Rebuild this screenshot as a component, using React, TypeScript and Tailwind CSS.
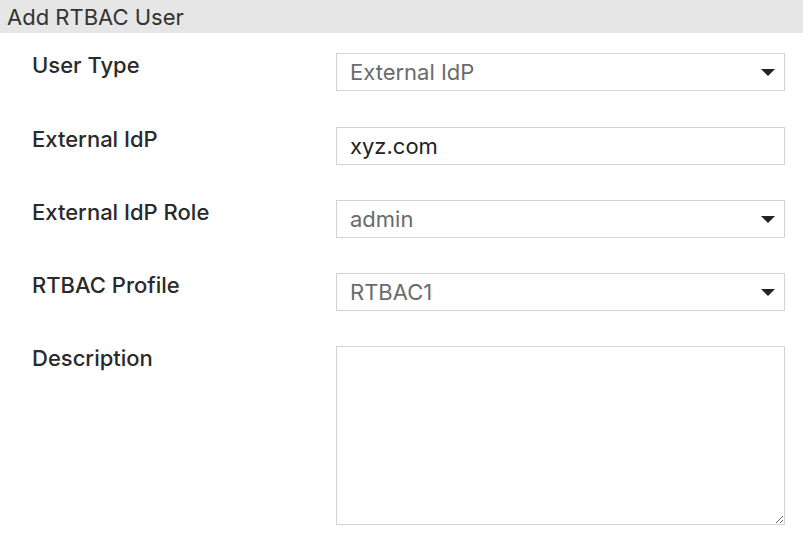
function Caret() {
  return (
    <svg className="w-[14px] h-[7px] shrink-0" viewBox="0 0 14 7" fill="#222">
      <polygon points="0 0 14 0 7 7" />
    </svg>
  );
}

function SelectBox({ value }: { value: string }) {
  return (
    <div className="flex items-center justify-between h-[38px] w-[449px] border border-[#d2d2d2] bg-white pl-[13px] pr-[9px]">
      <span className="text-[22px] leading-[26px] text-[#6b6b6b]">{value}</span>
      <Caret />
    </div>
  );
}

function Row({ label, extra, children }: { label: string; extra?: string; children: React.ReactNode }) {
  return (
    <div className={"flex items-start " + (extra ?? "")}>
      <div className="w-[304px] shrink-0 text-[22px] leading-[24px] font-medium text-[#2a2a2a]">{label}</div>
      {children}
    </div>
  );
}

export default function App() {
  return (
    <div className="w-[803px] h-[535px] bg-white overflow-hidden" style={{ fontFamily: "Inter, 'Noto Sans', sans-serif" }}>
      <div className="h-[33px] bg-[#e6e6e6] flex items-center px-[7px] text-[22px] leading-[26px] text-[#333]">Add RTBAC User</div>

      <div className="flex flex-col gap-[35px] pt-[20px] pl-[32px]">
        <Row label="User Type" extra="pb-[1px]">
          <SelectBox value="External IdP" />
        </Row>
        <Row label="External IdP">
          <div className="flex items-center h-[38px] w-[449px] border border-[#d2d2d2] bg-white pl-[13px]">
            <span className="text-[22px] leading-[26px] text-[#222]">xyz.com</span>
          </div>
        </Row>
        <Row label="External IdP Role">
          <SelectBox value="admin" />
        </Row>
        <Row label="RTBAC Profile">
          <SelectBox value="RTBAC1" />
        </Row>
        <Row label="Description">
          <textarea className="h-[179px] w-[449px] border border-[#d2d2d2] bg-white outline-none" />
        </Row>
      </div>
    </div>
  );
}
